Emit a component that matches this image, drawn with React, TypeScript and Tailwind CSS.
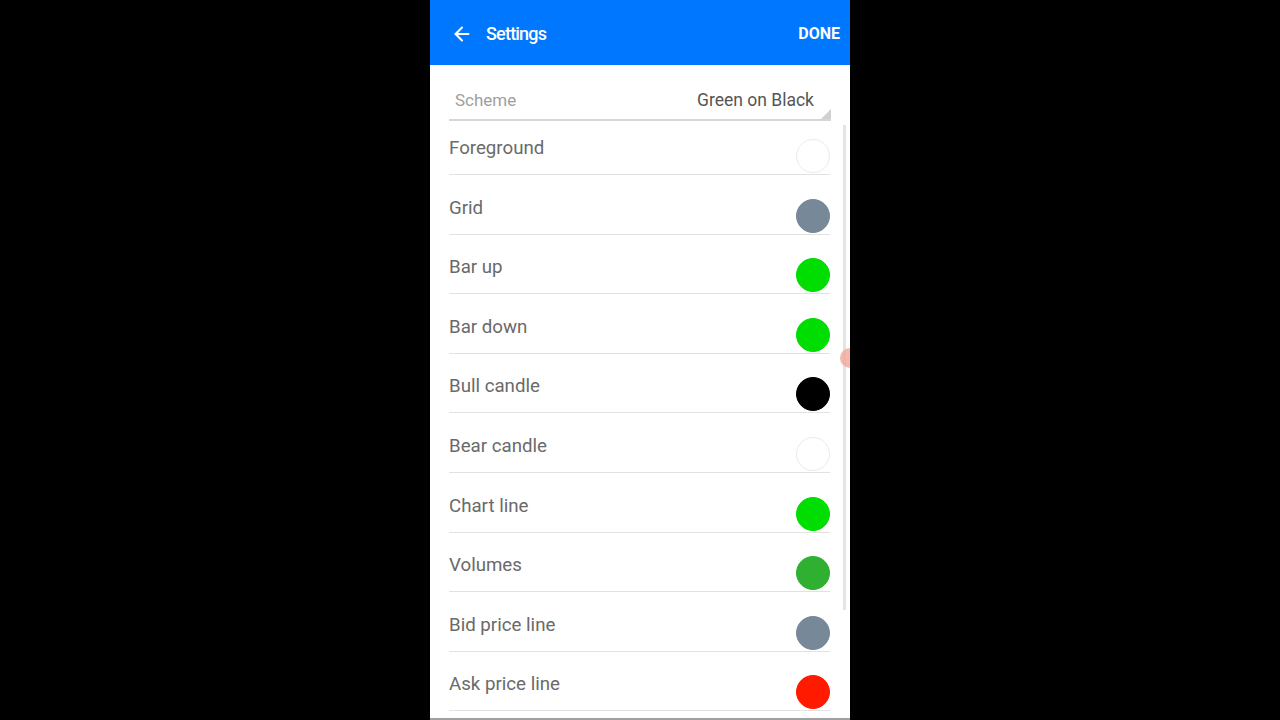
import { ArrowLeft } from 'lucide-react'

const rows = [
  { label: 'Foreground', color: '#ffffff' },
  { label: 'Grid', color: '#778899' },
  { label: 'Bar up', color: '#00dd00' },
  { label: 'Bar down', color: '#00dd00' },
  { label: 'Bull candle', color: '#000000' },
  { label: 'Bear candle', color: '#ffffff' },
  { label: 'Chart line', color: '#00dd00' },
  { label: 'Volumes', color: '#30b030' },
  { label: 'Bid price line', color: '#778899' },
  { label: 'Ask price line', color: '#ff1a00' },
]

export default function App() {
  return (
    <div className="flex h-[720px] w-full justify-center bg-black font-['Roboto',sans-serif]">
      <div className="relative flex h-full w-[420px] flex-col overflow-hidden border-b-2 border-b-[#a0a0a0] bg-white">
        {/* app bar */}
        <div className="flex h-[65px] shrink-0 items-center justify-between bg-[#0077ff] pl-[21px] pr-[10px] pt-[2px] text-white">
          <div className="flex items-center gap-[13px]">
            <ArrowLeft size={22} strokeWidth={2.25} />
            <span className="text-[18px] font-medium tracking-[-0.8px]">Settings</span>
          </div>
          <span className="text-[16px] font-bold">DONE</span>
        </div>

        {/* scheme spinner */}
        <div className="relative mx-[19px] mt-[21px] flex h-[35px] shrink-0 items-center justify-between border-b-2 border-b-[#d6d6d6] pb-[4px] pl-[6px] pr-[17px]">
          <span className="text-[17px] text-[#9e9e9e]">Scheme</span>
          <span className="text-[17.5px] text-[#555555]">Green on Black</span>
          <div className="absolute bottom-0 right-0 h-0 w-0 border-b-[10px] border-l-[10px] border-b-[#d0d0d0] border-l-transparent" />
        </div>

        {/* color rows */}
        <div className="flex flex-col px-[19px] pr-[20px]">
          {rows.map((r, i) => (
            <div
              key={r.label}
              className={
                'flex items-end justify-between border-b border-b-[#e2e2e2] ' +
                (i === 0 ? 'h-[54px]' : 'h-[59.6px]')
              }
            >
              <span className="mb-[14px] text-[18.7px] leading-[24px] text-[#6a6a6a]">{r.label}</span>
              <span
                className="mb-[1px] h-[34px] w-[34px] rounded-full border"
                style={{ backgroundColor: r.color, borderColor: r.color === '#ffffff' ? '#ebebeb' : r.color }}
              />
            </div>
          ))}
        </div>

        {/* scrollbar */}
        <div className="absolute left-[413px] top-[125px] h-[485px] w-[3px] bg-[#e4e4e4]" />
        {/* touch indicator */}
        <div className="absolute left-[410px] top-[348px] h-[20px] w-[20px] rounded-full bg-[#f0a898] opacity-80" />
      </div>
    </div>
  )
}
